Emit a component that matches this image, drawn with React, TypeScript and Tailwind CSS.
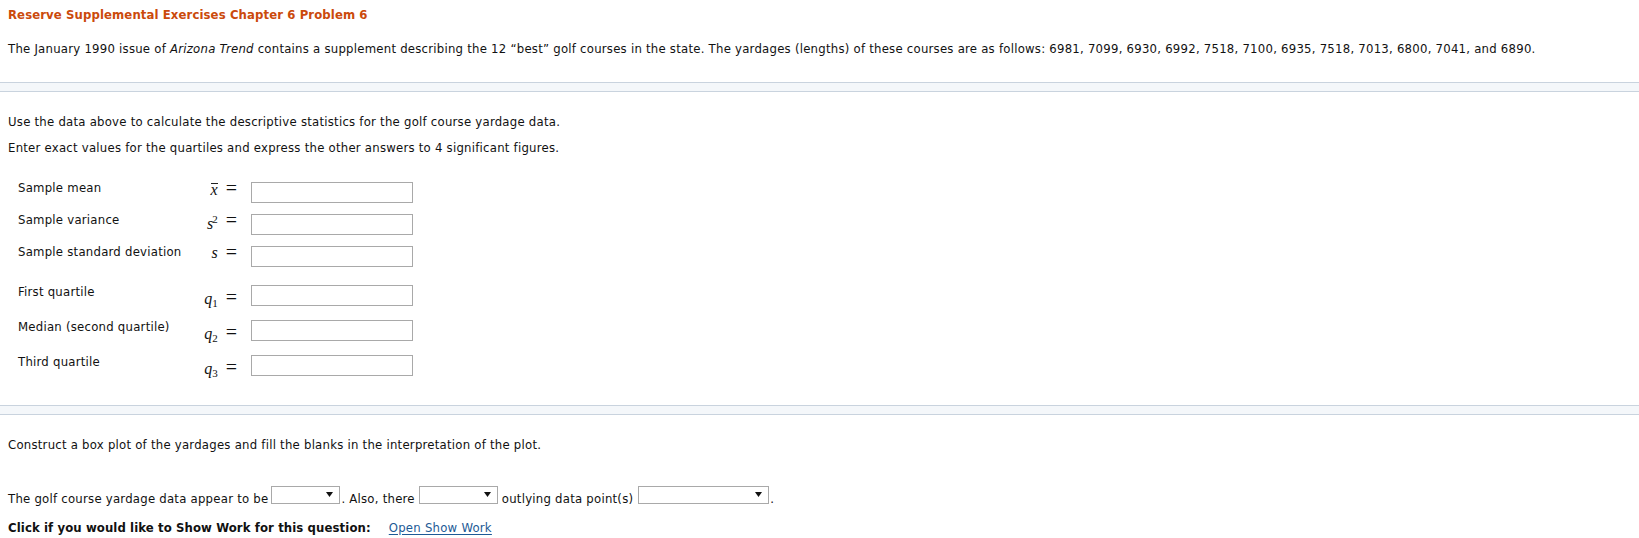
import React from "react";

const sans = "font-['DejaVu_Sans_Condensed','DejaVu_Sans',sans-serif] [font-stretch:condensed] tracking-[0.24px]";
const serif = "font-['Liberation_Serif','Times_New_Roman',serif] tracking-normal";

function Band() {
  return <div className="h-[10px] w-full border-y border-[#c9d3de] bg-[#f4f7fa]" />;
}

function Eq() {
  return <span className="ml-[8px] mr-[1px] not-italic text-[20px] leading-[16px]">=</span>;
}

function InputBox({ mt }: { mt: string }) {
  return <div className={`ml-[13px] h-[21px] w-[162px] border border-[#a9a9a9] bg-white ${mt}`} />;
}

function Select({ w }: { w: string }) {
  return (
    <div className={`relative h-[18px] border border-[#a9a9a9] bg-white ${w}`}>
      <svg className="absolute right-[6px] top-[5px]" width="7" height="5" viewBox="0 0 7 5">
        <polygon points="0,0 7,0 3.5,5" fill="#111" />
      </svg>
    </div>
  );
}

export default function App() {
  return (
    <div className={`h-[538px] w-[1639px] overflow-hidden bg-white text-[13px] leading-[16px] text-[#111] ${sans}`}>
      <div className="px-[8px] pt-[7px]">
        <div className="font-bold tracking-[0.1px] text-[#cb4a0c]">Reserve Supplemental Exercises Chapter 6 Problem 6</div>
        <p className="mt-[18px]">
          The January 1990 issue of <i>Arizona Trend</i> contains a supplement describing the 12 “best” golf courses in
          the state. The yardages (lengths) of these courses are as follows: 6981, 7099, 6930, 6992, 7518, 7100, 6935,
          7518, 7013, 6800, 7041, and 6890.
        </p>
      </div>

      <div className="mt-[25px]">
        <Band />
      </div>

      <div className="px-[8px]">
        <p className="mt-[22px]">Use the data above to calculate the descriptive statistics for the golf course yardage data.</p>
        <p className="mt-[10px]">Enter exact values for the quartiles and express the other answers to 4 significant figures.</p>

        <div className="mt-[24px]">
          {/* Sample mean */}
          <div className="flex h-[32px] items-start">
            <div className="w-[182px] pl-[10px]">Sample mean</div>
            <div className={`flex w-[48px] items-baseline justify-end leading-[16px] text-[16px] italic ${serif}`}>
              <span className="relative inline-block">
                <span className="absolute -left-[0px] right-0 top-[1px] h-px bg-[#222]" />
                x
              </span>
              <Eq />
            </div>
            <InputBox mt="mt-[2px]" />
          </div>
          {/* Sample variance */}
          <div className="flex h-[32px] items-start">
            <div className="w-[182px] pl-[10px]">Sample variance</div>
            <div className={`flex w-[48px] items-baseline justify-end leading-[16px] text-[16px] italic ${serif}`}>
              <span className="relative top-[2px]">s</span>
              <span className="relative -top-[4px] -ml-[1px] text-[11px] not-italic leading-none">2</span>
              <Eq />
            </div>
            <InputBox mt="mt-[2px]" />
          </div>
          {/* Sample std dev */}
          <div className="flex h-[32px] items-start">
            <div className="w-[182px] pl-[10px]">Sample standard deviation</div>
            <div className={`flex w-[48px] items-baseline justify-end leading-[16px] text-[16px] italic ${serif}`}>
              <span className="relative -top-[1px]">s</span>
              <Eq />
            </div>
            <InputBox mt="mt-[2px]" />
          </div>

          <div className="mt-[8px]">
            {[
              ["First quartile", "1"],
              ["Median (second quartile)", "2"],
              ["Third quartile", "3"],
            ].map(([label, sub]) => (
              <div key={label} className="flex h-[35px] items-start">
                <div className="w-[182px] pl-[10px]">{label}</div>
                <div className={`mt-[5px] flex w-[48px] items-baseline justify-end leading-[16px] text-[16px] ${serif}`}>
                  <span className="italic">q</span>
                  <span className="relative top-[3px] text-[11px] leading-none">{sub}</span>
                  <Eq />
                </div>
                <InputBox mt="mt-[1px]" />
              </div>
            ))}
          </div>
        </div>
      </div>

      <div className="mt-[16px]">
        <Band />
      </div>

      <div className="px-[8px]">
        <p className="mt-[22px]">Construct a box plot of the yardages and fill the blanks in the interpretation of the plot.</p>

        <div className="mt-[33px] flex items-start">
          <span className="mt-[5px]">The golf course yardage data appear to be</span>
          <div className="ml-[3px]">
            <Select w="w-[69px]" />
          </div>
          <span className="ml-[1px] mt-[5px]">. Also, there</span>
          <div className="ml-[4px]">
            <Select w="w-[79px]" />
          </div>
          <span className="ml-[4px] mt-[5px]">outlying data point(s)</span>
          <div className="ml-[5px]">
            <Select w="w-[131px]" />
          </div>
          <span className="ml-[1px] mt-[5px]">.</span>
        </div>

        <div className="mt-[13px] flex items-start">
          <span className="font-bold tracking-[0.1px]">Click if you would like to Show Work for this question:</span>
          <a href="#" className="ml-[18px] text-[#1d5a96] underline underline-offset-2">
            Open Show Work
          </a>
        </div>
      </div>
    </div>
  );
}
